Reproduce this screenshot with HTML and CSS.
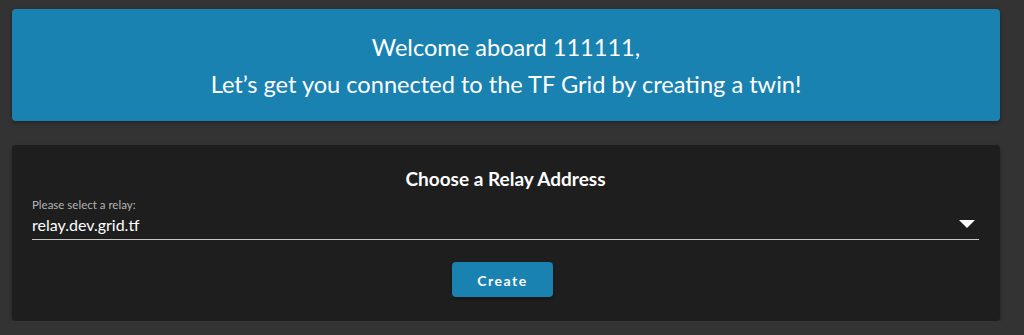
FILE: index.html
```html
<!DOCTYPE html>
<html lang="en">
<head>
    <meta charset="UTF-8">
    <meta name="viewport" content="width=device-width, initial-scale=1.0">
    <title>Create Twin</title>
    <link rel="stylesheet" href="styles.css">
</head>
<body>
    <div class="page">
        <div class="welcome">
            <p>Welcome aboard 111111,</p>
            <p>Let’s get you connected to the TF Grid by creating a twin!</p>
        </div>
        <div class="card">
            <h2 class="card-title">Choose a Relay Address</h2>
            <div class="select-field">
                <label class="select-label">Please select a relay:</label>
                <div class="select-input">
                    <span class="select-value">relay.dev.grid.tf</span>
                    <svg class="select-arrow" width="16" height="9" viewBox="0 0 16 9">
                        <path d="M0 0 H16 L8 8 Z" fill="#fff"/>
                    </svg>
                </div>
            </div>
            <div class="actions">
                <button class="btn-create">Create</button>
            </div>
        </div>
    </div>
</body>
</html>
```

FILE: styles.css
```css
body {
    margin: 0;
    background-color: #333333;
    font-family: Lato, "Open Sans", sans-serif;
    color: #fff;
}

.page {
    width: 988px;
    padding: 9px 0 0 12px;
    display: flex;
    flex-direction: column;
    gap: 24px;
}

.welcome {
    background-color: #1982b1;
    border-radius: 4px;
    box-shadow: 0 2px 4px rgba(0, 0, 0, 0.3);
    height: 112px;
    display: flex;
    flex-direction: column;
    justify-content: center;
    align-items: center;
    gap: 7px;
}

.welcome p {
    margin: 0;
    font-size: 23.6px;
    line-height: 30px;
    font-weight: 400;
}

.card {
    background-color: #1e1e1e;
    border-radius: 4px;
    box-shadow: 0 2px 4px rgba(0, 0, 0, 0.3);
    height: 176px;
    padding: 0 21px 0 20px;
    box-sizing: border-box;
}

.card-title {
    margin: 0;
    padding-top: 22px;
    font-size: 19px;
    line-height: 24px;
    font-weight: 700;
    text-align: center;
}

.select-field {
    margin-top: 8px;
}

.select-label {
    display: block;
    font-size: 11.5px;
    line-height: 12px;
    color: #b3b3b3;
}

.select-input {
    display: flex;
    align-items: center;
    justify-content: space-between;
    height: 26px;
    border-bottom: 1px solid #c8c8c8;
    padding-bottom: 2px;
}

.select-value {
    font-size: 16px;
}

.select-arrow {
    margin-right: 4px;
}

.actions {
    display: flex;
    justify-content: center;
    margin-top: 22px;
    padding-right: 6px;
}

.btn-create {
    width: 101px;
    height: 35px;
    padding-top: 2px;
    border: none;
    border-radius: 4px;
    background-color: #1982b1;
    color: #fff;
    font-family: Lato, sans-serif;
    font-size: 14px;
    font-weight: 700;
    letter-spacing: 1.5px;
    box-shadow: 0 2px 3px rgba(0, 0, 0, 0.3);
}
```
